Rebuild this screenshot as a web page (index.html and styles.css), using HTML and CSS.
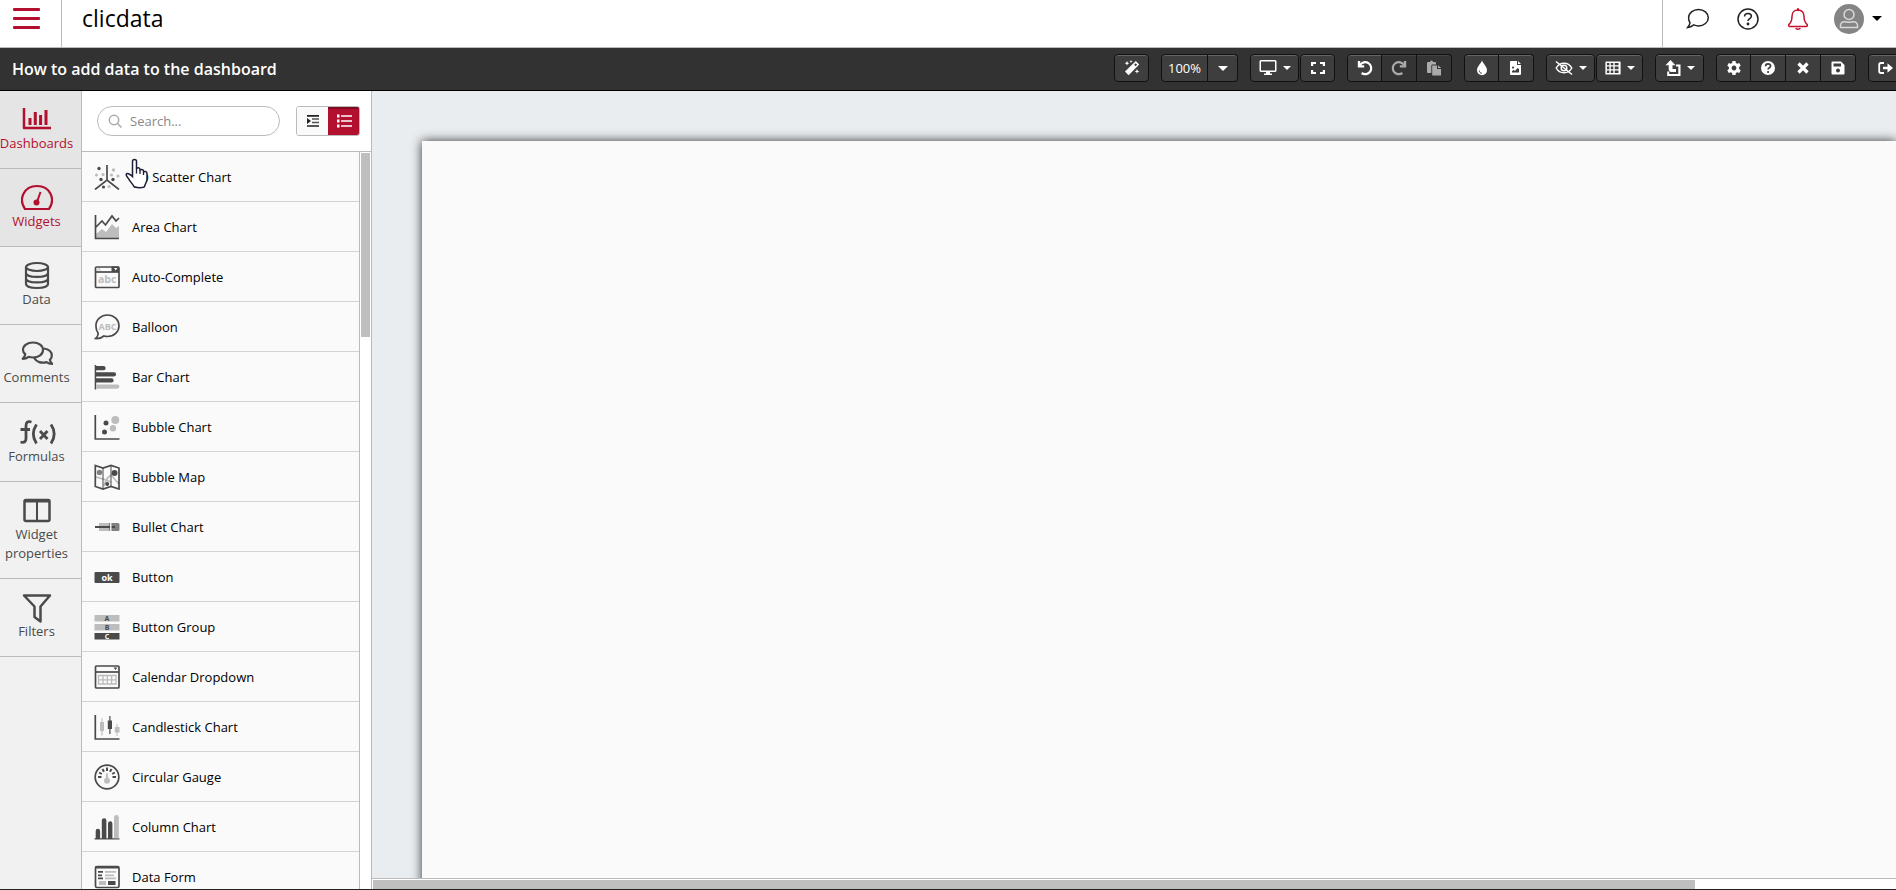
FILE: index.html
```html
<!DOCTYPE html>
<html lang="en">
<head>
    <meta charset="UTF-8">
    <meta name="viewport" content="width=device-width, initial-scale=1.0">
    <title>clicdata</title>
    <link rel="stylesheet" href="styles.css">
</head>
<body>

    <header class="topbar">
        <button class="menu-btn" aria-label="Menu"><span></span><span></span><span></span></button>
        <h1 class="brand">clicdata</h1>
        <div class="account">
            <button class="top-icon" aria-label="Chat">
                <svg width="24" height="24" viewBox="0 0 24 24"><path d="M12.5 2.5c5.400 0 9.800 3.600 9.800 8.200s-4.400 8.200-9.800 8.200c-1.700 0-3.300-.4-4.700-1C6 19.300 4 20.300 1.600 20.500c1.200-1.400 2.200-3.200 2.400-4.700-.9-1.500-1.400-3.200-1.400-5.100 0-4.600 4.500-8.200 9.900-8.200z"/></svg>
            </button>
            <button class="top-icon" aria-label="Help">
                <svg width="24" height="24" viewBox="0 0 24 24"><circle cx="12" cy="12" r="10"/><path d="M8.600 9.400c0-2 1.500-3 3.400-3s3.400 1.100 3.400 2.800c0 2.300-3.400 2.400-3.400 4.900"/><circle cx="12" cy="17" r=".7"/></svg>
            </button>
            <button class="top-icon alert" aria-label="Notifications">
                <svg width="24" height="24" viewBox="0 0 24 24"><path d="M12 1v2M12 3c-3.800 0-6 2.800-6 6.200 0 5-1.200 6.500-3 8.200-.8.800-.3 2 .8 2h16.400c1.100 0 1.600-1.200.8-2-1.800-1.700-3-3.200-3-8.200C18 5.800 15.800 3 12 3zM9.800 21c.5 1.500 3.900 1.500 4.400 0"/></svg>
            </button>
            <button class="avatar-btn" aria-label="Account">
                <svg width="30" height="30" viewBox="0 0 30 30"><circle cx="15" cy="15" r="15" fill="#848484"/><g fill="none" stroke="#d8d8d8" stroke-width="1.500"><circle cx="15" cy="10.500" r="5"/><path d="M6.500 23.500v-2c0-2 1.600-3.800 4-3.800 1.600 0 2.600.6 4.500.6s2.900-.6 4.500-.6c2.400 0 4 1.800 4 3.800v2z"/></g></svg>
                <span class="caret"></span>
            </button>
        </div>
    </header>

    <div class="editbar">
        <h2 class="doc-title">How to add data to the dashboard</h2>
        <div class="tools">
            <div class="group">
                <button class="tool" aria-label="Wizard"><svg width="16" height="16" viewBox="0 0 16 16"><path d="M11.800 1l3.400 3.400L4.600 15.200l-3.600-3.600z"/><path d="M10.200 4.800l1.400 1.400 1.500-1.500-1.400-1.400z" fill="#3c3c3c"/><path d="M3 1l.7 1.500L5.200 3.200l-1.500.7L3 5.400l-.7-1.500-1.500-.7 1.500-.7zM7 0l.5 1 1 .5-1 .5-.5 1-.5-1-1-.5 1-.5zM13 9l.7 1.700 1.700.7-1.700.7-.7 1.700-.7-1.700-1.700-.7 1.700-.7z"/></svg></button>
            </div>
            <div class="group">
                <button class="tool zoom">100%</button>
                <button class="tool narrow" aria-label="Zoom levels"><span class="caret"></span></button>
            </div>
            <div class="pair">
                <button class="tool wide" aria-label="Screen"><svg width="18" height="16" viewBox="0 0 18 16"><path fill-rule="evenodd" d="M2 0h14a1.500 1.500 0 0 1 1.500 1.500v9A1.500 1.500 0 0 1 16 12h-5v1.500h2V15H5v-1.500h2V12H2a1.500 1.500 0 0 1-1.500-1.500v-9A1.500 1.500 0 0 1 2 0zm0 1.500v9h14v-9z"/></svg><span class="caret"></span></button>
                <button class="tool" aria-label="Full screen"><svg width="16" height="16" viewBox="0 0 16 16"><path d="M1 6V2h5v2H3.200v2zM10 2h5v4h-2.200V4H10zM1 10v4h5v-2H3.200v-2zM12.800 10H15v4h-5v-2h2.800z"/></svg></button>
            </div>
            <div class="group">
                <button class="tool" aria-label="Undo"><svg width="16" height="16" viewBox="0 0 16 16"><path class="line" d="M3 5.200A6 6 0 1 1 4.600 13"/><path d="M.8 1v6.400h6.400V5.300H3.200V1z"/></svg></button>
                <button class="tool" aria-label="Redo" disabled><svg width="16" height="16" viewBox="0 0 16 16"><path class="line" d="M13 5.200A6 6 0 1 0 11.400 13"/><path d="M15.200 1v6.400H8.800V5.300h4V1z"/></svg></button>
                <button class="tool" aria-label="Paste" disabled><svg width="16" height="16" viewBox="0 0 16 16"><path d="M2 2h2a1.500 1.500 0 0 1 3 0h2a1 1 0 0 1 1 1v1.500H6.500A1.200 1.200 0 0 0 5.300 5.700V13H2a1 1 0 0 1-1-1V3a1 1 0 0 1 1-1z"/><path d="M6.200 5.500H11V9h4v6.500H6.200zM12 5.300L15.200 8H12z"/></svg></button>
            </div>
            <div class="group">
                <button class="tool" aria-label="Theme"><svg width="16" height="16" viewBox="0 0 16 16"><path d="M8 .5c.8 3 5 5.800 5 9.800a5 5 0 0 1-10 0C3 6.300 7.200 3.500 8 .5z"/><path d="M5.300 10.500c0 1.600 1 2.700 2.500 2.800" fill="none" stroke="#3c3c3c"/></svg></button>
                <button class="tool" aria-label="Background"><svg width="16" height="16" viewBox="0 0 16 16"><path fill-rule="evenodd" d="M3 1h6v4h4v9a1 1 0 0 1-1 1H3a1 1 0 0 1-1-1V2a1 1 0 0 1 1-1zm1 11.500h7V9L9.500 8l-2.500 3-1.300-1.300L4 11.300zM5 6.500a1 1 0 1 0 .01 0zM10 1l3 3h-3z"/></svg></button>
            </div>
            <div class="pair">
                <button class="tool wide" aria-label="Visibility"><svg width="18" height="16" viewBox="0 0 18 16"><path class="thin" d="M1.200 8C3 4.800 5.800 3.200 9 3.200S15 4.800 16.800 8C15 11.200 12.200 12.800 9 12.800S3 11.200 1.200 8z"/><circle class="thin" cx="9" cy="8" r="2.800"/><path class="thin" d="M1 1.500l16 13"/></svg><span class="caret"></span></button>
                <button class="tool grid" aria-label="Grid"><svg width="16" height="16" viewBox="0 0 16 16"><path fill-rule="evenodd" d="M1 1.500h14a.6.6 0 0 1 .6.6V14a.6.6 0 0 1-.6.600H1a.6.6 0 0 1-.6-.6V2a.6.6 0 0 1 .6-.5zm.9 1.500v2.200h2.500V3zm3.900 0v2.200h2.500V3zm3.900 0v2.200h3.800V3zm-7.800 3.600v2.600h2.500V6.600zm3.900 0v2.600h2.500V6.600zm3.900 0v2.600h3.800V6.600zm-7.800 4v2.500h2.500v-2.500zm3.900 0v2.500h2.500v-2.500zm3.900 0v2.500h3.800v-2.500z"/></svg><span class="caret"></span></button>
            </div>
            <div class="group">
                <button class="tool wide" aria-label="Share"><svg width="16" height="17" viewBox="0 0 16 17"><path d="M5.500 0L10.500 5.200H7.500v3.800h3.500v3H7A3 3 0 0 1 3.700 9V5.200H.5z"/><path d="M11 4.500h4.500V16H2.200v-4.500h2V14H13.300V6.500H11z"/></svg><span class="caret"></span></button>
            </div>
            <div class="group">
                <button class="tool" aria-label="Settings"><svg width="16" height="16" viewBox="0 0 16 16"><path fill-rule="evenodd" d="M6.500 1h3l.4 2 1.300.8 2-.7 1.500 2.600L13.100 7v2l1.600 1.300-1.500 2.600-2-.7-1.300.8-.4 2h-3l-.4-2-1.300-.8-2 .7-1.500-2.600L2.900 9V7L1.300 5.700l1.500-2.600 2 .7L6.100 3zM8 5.600a2.400 2.400 0 1 0 .01 0z"/></svg></button>
                <button class="tool" aria-label="Help"><svg width="16" height="16" viewBox="0 0 16 16"><circle cx="8" cy="8" r="7"/><path d="M5.500 6.200c.2-3.200 5.200-2.900 5.100-.1 0 1.700-2.500 1.600-2.500 3.500" fill="none" stroke="#3c3c3c" stroke-width="1.700"/><circle cx="8.100" cy="12" r="1.100" fill="#3c3c3c"/></svg></button>
                <button class="tool" aria-label="Close"><svg width="16" height="16" viewBox="0 0 16 16"><path d="M3.500 3.500l9 9M12.500 3.500l-9 9" stroke="#fff" stroke-width="3.200"/></svg></button>
                <button class="tool" aria-label="Save"><svg width="16" height="16" viewBox="0 0 16 16"><path fill-rule="evenodd" d="M2.500 1.500H11l3.500 3.500v8.500a1 1 0 0 1-1 1h-11a1 1 0 0 1-1-1v-11a1 1 0 0 1 1-1zM3.500 3.500v3h7.500v-3zM8 8.600a2 2 0 1 0 .01 0z"/></svg></button>
            </div>
            <div class="group">
                <button class="tool" aria-label="Exit"><svg width="16" height="16" viewBox="0 0 16 16"><path d="M6 3H3a1.800 1.800 0 0 0-1.800 1.800v6.400A1.800 1.800 0 0 0 3 13h3" fill="none" stroke="#fff" stroke-width="1.800"/><path d="M5 6.700h4.500V3.200L15 8l-5.500 4.800V9.300H5z"/></svg></button>
            </div>
        </div>
    </div>

    <main class="workspace">
        <nav class="sidebar">
            <button class="side-item active">
                <svg width="32" height="32" viewBox="0 0 32 32"><path d="M3 5v20h27" stroke-width="2.500"/><path d="M9 15v7M14.300 9v13M19.600 12v10M25 7v15" stroke-width="3"/></svg>
                Dashboards
            </button>
            <button class="side-item active">
                <svg width="32" height="32" viewBox="0 0 32 32"><path d="M4 28C-3 18 3 5 16 5s19 13 12 23z" stroke-width="2.200"/><path d="M16 21l3.500-10" stroke-width="2"/><circle cx="15.500" cy="21.500" r="3" class="solid"/></svg>
                Widgets
            </button>
            <button class="side-item">
                <svg width="32" height="32" viewBox="0 0 32 32"><ellipse cx="16" cy="8" rx="11" ry="4"/><path d="M5 8v17c0 5.300 22 5.300 22 0V8M5 14c0 5.300 22 5.300 22 0M5 19.500c0 5.300 22 5.300 22 0"/></svg>
                Data
            </button>
            <button class="side-item">
                <svg width="32" height="32" viewBox="0 0 32 32"><path d="M12 5.500c5.800 0 10 3.300 10 7.500s-4.200 7.500-10 7.500c-1.700 0-3-.2-4.300-.7-1.600 1.200-3.700 2-6 2 1.500-1.400 2.300-3 2.600-4.600C2.700 16 2 14.600 2 13c0-4.200 4.200-7.500 10-7.500z"/><path d="M22.800 11.500c4.800.6 8 3.300 8 7.200 0 1.600-.7 3-1.900 4.200.3 1.400 1 2.700 2.300 4-2.200 0-4.200-.6-5.700-1.800-5 1.400-10.200 0-12.300-4"/></svg>
                Comments
            </button>
            <button class="side-item">
                <svg class="fx" width="38" height="33" viewBox="0 -1 38 33"><path d="M13.500 6c-4-1.200-5.500.3-5.500 4v12.500c0 3-1.500 4.500-5.500 3.500M2.500 13.500H12"/><path d="M18.500 8.500c-4 6-4 13 0 19M33 8.500c4 6 4 13 0 19M22 15l7.500 8M29.500 15L22 23"/></svg>
                Formulas
            </button>
            <button class="side-item">
                <svg width="32" height="32" viewBox="0 0 32 32"><rect x="3.500" y="6" width="25" height="21" rx="1.500" stroke-width="2.500"/><path d="M16 6v21" stroke-width="2"/><path d="M3 7h26" stroke-width="3"/></svg>
                Widget properties
            </button>
            <button class="side-item">
                <svg width="32" height="32" viewBox="0 0 32 32"><path d="M3 4.500h26L19.500 15.500V30.500l-6-4.500V15.500z" stroke-width="2.500"/></svg>
                Filters
            </button>
        </nav>

        <section class="panel">
            <div class="panel-head">
                <label class="search">
                    <svg width="14" height="14" viewBox="0 0 14 14"><circle cx="6" cy="6" r="4.700"/><path d="M9.500 9.500l4 4"/></svg>
                    <input type="search" placeholder="Search..." aria-label="Search widgets">
                </label>
                <div class="view-switch">
                    <button aria-label="Grouped view"><svg width="14" height="14" viewBox="0 0 14 14"><path d="M1 1.800h12M1 12h12" stroke="#222" stroke-width="1.700"/><path d="M6 5h7M6 8.500h7" stroke="#555" stroke-width="1.700"/><path d="M1 4v6l4-3z" fill="#222"/></svg></button>
                    <button class="on" aria-label="List view"><svg width="16" height="14" viewBox="0 0 16 14"><path d="M5 2h11M5 7h11M5 12h11" stroke="#fff" stroke-width="1.700"/><path d="M1 2h2.500M1 7h2.500M1 12h2.500" stroke="#fff" stroke-width="2.800"/></svg></button>
                </div>
            </div>
            <div class="panel-body">
                <ul class="widgets">
                    <li>
                        <svg width="26" height="26" viewBox="0 0 26 26"><path class="ln" d="M13 1v15M1 25.500L13 16l12 9.500"/><g class="dk"><circle cx="5" cy="4.500" r="1.700"/><circle cx="7" cy="15.500" r="1.700"/><circle cx="19" cy="15.500" r="1.700"/><circle cx="9.500" cy="23" r="1.600"/></g><g class="lt"><circle cx="2.500" cy="11" r="1.600"/><circle cx="9" cy="10.500" r="1.600"/><circle cx="19.500" cy="6" r="1.700"/><circle cx="17.500" cy="11" r="1.600"/><circle cx="24" cy="12" r="1.600"/><circle cx="15" cy="22.500" r="1.600"/></g></svg>
                        <span>3D Scatter Chart</span>
                        <svg class="pointer" width="24" height="32" viewBox="0 0 24 32"><path d="M7.500 18.500V3.600c0-2.700 4-2.700 4 0v7.600c0-2 3.500-2 3.500.3v1c.4-1.700 3.500-1.400 3.500.6v1.200c.6-1.400 3.500-1.200 3.500 1.200v5.500c0 2-.8 3.600-1.600 5l-.9 2.500c-.3 1.500-9.500 1.500-10.500 0-.9-2-4-5-5.200-7.300C2.500 18.600.8 17.800 1.200 16.500c.5-1.600 3.300-1.200 6.300 2z" fill="#fff" stroke="#1d1f35" stroke-width="1.500"/><path d="M11.500 11v4.500M15 12v4M18.500 14v3" stroke="#1d1f35" stroke-width="1.300"/></svg>
                    </li>
                    <li>
                        <svg width="26" height="26" viewBox="0 0 26 26"><path class="lt" d="M2 20l6-5 4 3 6-8 4 4 3-2v12H2z"/><path class="ln" d="M1.500 1v23.500H25M2 13l6-6 3.500 4L18 2l4 5 3-3"/></svg>
                        <span>Area Chart</span>
                    </li>
                    <li>
                        <svg width="26" height="26" viewBox="0 0 26 26"><rect class="ln" x="1.500" y="3" width="23.500" height="20.500" rx="1"/><path class="ln" d="M2 8h23"/><path class="dk" d="M17.500 2.500H25V8h-7.500z"/><path d="M20 4h3.400l-1.700 2.500z" fill="#fff"/><path d="M3.500 7l1.500-3 1.500 3" fill="none" stroke="#bbb" stroke-width=".8"/><text class="lt" x="13.200" y="19" font-size="10.500">abc</text></svg>
                        <span>Auto-Complete</span>
                    </li>
                    <li>
                        <svg width="26" height="26" viewBox="0 0 26 26"><path class="ln" d="M13.500 1c6.500 0 11.500 4.700 11.500 10.800s-5 10.700-11.500 10.700c-1.200 0-2.500-.2-3.600-.5-2 1.800-5 2.700-8.200 2.500 1.600-1.400 2.500-3.200 2.500-5.200-1.500-2-2.300-4.500-2.300-7.500C1.900 5.700 7 1 13.500 1z"/><text class="lt" x="13.500" y="15.500" font-size="9">ABC</text></svg>
                        <span>Balloon</span>
                    </li>
                    <li>
                        <svg width="26" height="26" viewBox="0 0 26 26"><path class="dk" d="M.7 1h1.500v24.500H.7zM2 2h7.500a2 2 0 0 1 0 4.300H2zM2 8.200h18a2 2 0 0 1 0 4.300H2zM2 14.300h15.500a2 2 0 0 1 0 4.300H2z"/><path class="lt" d="M2.200 20.400h21a2 2 0 0 1 0 4.300h-21z"/></svg>
                        <span>Bar Chart</span>
                    </li>
                    <li>
                        <svg width="26" height="26" viewBox="0 0 26 26"><path class="ln" d="M1.300 1v24H25.500"/><circle class="lt" cx="21.300" cy="6" r="4"/><circle class="lt" cx="19" cy="14.300" r="3.200"/><circle class="dk" cx="12" cy="9" r="2.500"/><circle class="dk" cx="10.500" cy="18" r="2.500"/></svg>
                        <span>Bubble Chart</span>
                    </li>
                    <li>
                        <svg width="26" height="26" viewBox="0 0 26 26"><path d="M2 13l7 2M10 22c1-5 3-8 7-11l8 9M9 15l8 3" fill="none" stroke="#bbb" stroke-width="1.600"/><path class="ln" d="M1.300 1.500L9 4l8-2.500L25 4v21l-8-2.500L9 25l-7.700-2.500z"/><path d="M9 4v21M17 1.500v21" fill="none" stroke="#4a4a4a"/><circle class="md" cx="5.500" cy="8.500" r="2.700"/><circle class="dk" cx="20.500" cy="9" r="3"/><circle class="dk" cx="13.200" cy="20" r="2"/></svg>
                        <span>Bubble Map</span>
                    </li>
                    <li>
                        <svg width="26" height="26" viewBox="0 0 26 26"><path class="lt" d="M5 9h10v8H5z"/><path class="md" d="M15 9h9a1.500 1.500 0 0 1 1.500 1.500v5A1.500 1.500 0 0 1 24 17h-9z"/><path class="dk" d="M1 12h20v2H1z"/><path d="M16 9h1.500v8H16z" fill="#eee"/></svg>
                        <span>Bullet Chart</span>
                    </li>
                    <li>
                        <svg width="26" height="26" viewBox="0 0 26 26"><rect class="dk" x=".5" y="8" width="25" height="11" rx="1"/><text x="13" y="16.500" font-size="9" fill="#fff">ok</text></svg>
                        <span>Button</span>
                    </li>
                    <li>
                        <svg width="26" height="26" viewBox="0 0 26 26"><path class="lt" d="M.5 1h25v6.500H.5zM.5 10h25v6.500H.5z"/><path class="dk" d="M.5 19h25v6.500H.5z"/><text class="dk" x="13" y="6.800" font-size="7">A</text><text class="dk" x="13" y="15.800" font-size="7">B</text><text x="13" y="24.800" font-size="7" fill="#fff">C</text></svg>
                        <span>Button Group</span>
                    </li>
                    <li>
                        <svg width="26" height="26" viewBox="0 0 26 26"><rect class="ln" x="1.500" y="2" width="23.500" height="22" rx="1"/><path class="ln" d="M2 8h23"/><path class="dk" d="M19.500 3.500h4L21.500 6z"/><path d="M4.500 11.500h17.500v8.500H4.500zM4.500 15.800H22M9 11.500V20M13.300 11.500V20M17.600 11.500V20" fill="none" stroke="#bbb" stroke-width="1.300"/></svg>
                        <span>Calendar Dropdown</span>
                    </li>
                    <li>
                        <svg width="26" height="26" viewBox="0 0 26 26"><path class="ln" d="M1.300 1v24H25.500"/><path class="lt" d="M7.500 4h1v4H10v9H8.600v4.500H7.400V17H6V8h1.500zM22.500 10h1v3h2v5.500h-2V22h-1v-3.500h-1.700V13h1.700z"/><path class="dk" d="M15.300 2h1.200v4.500H18V15h-1.500v5h-1.200v-5h-1.500V6.500h1.500z"/></svg>
                        <span>Candlestick Chart</span>
                    </li>
                    <li>
                        <svg width="26" height="26" viewBox="0 0 26 26"><circle class="ln" cx="13" cy="13" r="11.800"/><path d="M4 13h3.500M5.200 8.500l2.600 1.500M8.500 5l1.500 2.800M13 3.500v3.500M17.500 5L16 7.800M20.800 8.500L18.200 10M22 13h-3.500" fill="none" stroke="#4a4a4a" stroke-width="2"/><path class="lt" d="M12.300 9h1.400l.6 5.500h-2.600z"/><circle class="lt" cx="13" cy="16.800" r="3"/></svg>
                        <span>Circular Gauge</span>
                    </li>
                    <li>
                        <svg width="26" height="26" viewBox="0 0 26 26"><path class="dk" d="M.5 24.200h25v1.300H.5zM1.700 25v-8a2.200 2.200 0 0 1 4.400 0v8zM7.800 25V6.500a2.300 2.300 0 0 1 4.600 0V25zM14 25V9.500a2.200 2.200 0 0 1 4.400 0V25z"/><path class="lt" d="M20 24.200V3.500a2.400 2.400 0 0 1 4.800 0v20.700z"/></svg>
                        <span>Column Chart</span>
                    </li>
                    <li>
                        <svg width="26" height="26" viewBox="0 0 26 26"><rect class="ln" x="1.500" y="2.500" width="23.500" height="21" rx="1.500"/><path class="dk" d="M1.500 2h23.500v2.500H1.500zM4 7h5v1.800H4zM4 10.500h4v1.800H4zM4 13.500h5v1.800H4zM14 17h7.500v4H14z"/><path class="lt" d="M11 7h11v1.800H11zM11 10.500h9v1.800h-9zM11 13.500h11v1.800H11zM5 17h7v4H5z"/></svg>
                        <span>Data Form</span>
                    </li>
                </ul>
                <div class="scroll-y"><div class="thumb"></div></div>
            </div>
        </section>

        <section class="stage">
            <div class="stage-view">
                <div class="sheet"></div>
            </div>
            <div class="scroll-x"><div class="thumb"></div></div>
        </section>
    </main>

</body>
</html>
```
FILE: styles.css
```css
* {
    box-sizing: border-box;
}

body {
    margin: 0;
    height: 100vh;
    display: flex;
    flex-direction: column;
    overflow: hidden;
    font-family: "Open Sans", "Noto Sans", sans-serif;
    font-size: 13px;
    color: #000;
    background: #fff;
}

button {
    margin: 0;
    padding: 0;
    border: none;
    background: none;
    font: inherit;
    color: inherit;
    cursor: pointer;
}

svg {
    display: block;
    flex: none;
}

h1, h2, ul {
    margin: 0;
    padding: 0;
}

.caret {
    border: 5px solid transparent;
    border-top-color: currentColor;
    border-bottom: none;
}

/* top bar */
.topbar {
    flex: none;
    display: flex;
    height: 48px;
    border-bottom: 1px solid #bbb;
}

.menu-btn {
    width: 62px;
    padding: 8px 21px 18px 13px;
    border-right: 1px solid #bbb;
    display: flex;
    flex-direction: column;
    justify-content: space-between;
}

.menu-btn span {
    width: 27px;
    height: 3px;
    border-radius: 1px;
    background: #b30f2f;
}

.brand {
    flex: 1;
    padding-left: 20px;
    font-size: 23px;
    font-weight: 400;
    line-height: 36px;
}

.account {
    display: flex;
    align-items: center;
    gap: 26px;
    padding: 0 14px 10px 23px;
    border-left: 1px solid #bbb;
}

.top-icon svg {
    fill: none;
    stroke: #222;
    stroke-width: 1.5;
}

.top-icon.alert svg {
    stroke: #c4122f;
}

.avatar-btn {
    display: flex;
    align-items: center;
    gap: 8px;
    margin-left: -2px;
}

/* edit bar */
.editbar {
    flex: none;
    display: flex;
    height: 43px;
    padding: 6px 0 0 12px;
    overflow: hidden;
    background: #323232;
    border-bottom: 1px solid #000;
    color: #fff;
}

.doc-title {
    flex: 1;
    font-size: 16px;
    font-weight: 600;
    line-height: 30px;
    white-space: nowrap;
}

.tools {
    display: flex;
    gap: 12px;
    margin-right: -7px;
}

.group, .pair {
    display: flex;
}

.pair {
    gap: 1px;
}

.tool {
    width: 35px;
    height: 28px;
    display: flex;
    align-items: center;
    justify-content: center;
    gap: 6px;
    border: 1px solid #111;
    border-radius: 4px;
    background: #3e3e3e;
    box-shadow: inset 0 1px 0 #666;
}

.group .tool + .tool {
    border-left: none;
    border-top-left-radius: 0;
    border-bottom-left-radius: 0;
}

.group .tool:not(:last-child) {
    border-top-right-radius: 0;
    border-bottom-right-radius: 0;
}

.tool:disabled {
    background: #343434;
    box-shadow: inset 0 1px 0 #444;
}

.tool svg {
    fill: #fff;
}

.tool:disabled svg {
    fill: #aaa;
}

.tool .line {
    fill: none;
    stroke: #fff;
    stroke-width: 2.2;
}

.tool:disabled .line {
    stroke: #aaa;
}

.tool .thin {
    fill: none;
    stroke: #fff;
    stroke-width: 1.5;
}

.tool .caret {
    border-width: 4px;
    border-bottom: none;
}

.tool.zoom {
    width: 47px;
}

.tool.narrow {
    width: 30px;
}

.tool.narrow .caret {
    border-width: 5px;
    border-bottom: none;
}

.tool.wide {
    width: 49px;
}

.tool.grid {
    width: 47px;
}

/* main area */
.workspace {
    flex: 1;
    display: flex;
    min-height: 0;
    border-bottom: 1px solid #222;
}

.sidebar {
    flex: none;
    width: 82px;
    background: #f1f1f1;
    border-right: 1px solid #bbb;
}

.side-item {
    display: flex;
    flex-direction: column;
    align-items: center;
    width: 100%;
    padding: 12px 8px 15px 0;
    border-bottom: 1px solid #bbb;
    line-height: 19px;
    color: #4a4a4a;
}

.side-item.active {
    background: #e5e5e5;
    color: #b30f2f;
}

.side-item svg {
    margin-bottom: -1px;
    fill: none;
    stroke: currentColor;
    stroke-width: 2.2;
    stroke-linejoin: round;
}

.side-item .fx {
    stroke-width: 2.8;
}

.side-item .solid {
    fill: currentColor;
    stroke: none;
}

.panel {
    flex: none;
    display: flex;
    flex-direction: column;
    width: 290px;
    border-right: 1px solid #bbb;
}

.panel-head {
    flex: none;
    display: flex;
    justify-content: space-between;
    padding: 15px 11px 15px 15px;
    border-bottom: 1px solid #bbb;
}

.search {
    display: flex;
    align-items: center;
    gap: 8px;
    width: 183px;
    height: 30px;
    padding: 0 10px;
    border: 1px solid #bbb;
    border-radius: 15px;
}

.search svg {
    fill: none;
    stroke: #aaa;
    stroke-width: 1.5;
}

.search input {
    flex: 1;
    min-width: 0;
    padding: 0;
    border: none;
    outline: none;
    background: none;
    font: inherit;
}

.search input::placeholder {
    color: #888;
}

.view-switch {
    display: flex;
    height: 30px;
    border: 1px solid #bbb;
    border-radius: 3px;
    overflow: hidden;
}

.view-switch button {
    display: flex;
    align-items: center;
    justify-content: center;
    width: 31px;
    background: #fafafa;
}

.view-switch .on {
    background: #b30f2f;
    box-shadow: inset 0 2px 1px #7d0a20;
}

.panel-body {
    flex: 1;
    display: flex;
    min-height: 0;
}

.widgets {
    flex: 1;
    overflow: hidden;
    list-style: none;
    background: #fafafa;
    border-right: 1px solid #bbb;
}

.widgets li {
    position: relative;
    display: flex;
    align-items: center;
    gap: 12px;
    height: 50px;
    padding-left: 12px;
    border-bottom: 1px solid #d3d3d3;
}

.widgets .pointer {
    position: absolute;
    left: 43px;
    top: 6px;
}

.ln {
    fill: none;
    stroke: #4a4a4a;
    stroke-width: 1.7;
}

.dk {
    fill: #4a4a4a;
}

.md {
    fill: #808080;
}

.lt {
    fill: #bdbdbd;
}

.widgets text {
    font-weight: 700;
    text-anchor: middle;
}

.scroll-y {
    width: 11px;
    padding: 1px 0 0 1px;
}

.scroll-y .thumb {
    width: 9px;
    height: 25%;
    background: #bfbfbf;
}

.stage {
    flex: 1;
    display: flex;
    flex-direction: column;
    min-width: 0;
}

.stage-view {
    flex: 1;
    padding: 50px 0 0 50px;
    overflow: hidden;
    background: #e9edf0;
}

.sheet {
    height: 110%;
    background: #fafafa;
    box-shadow: 0 0 10px #333;
}

.scroll-x {
    height: 11px;
    padding: 1px 0 0 1px;
    border-top: 1px solid #bbb;
}

.scroll-x .thumb {
    width: 87%;
    max-width: 1322px;
    height: 9px;
    background: #bfbfbf;
}
```
